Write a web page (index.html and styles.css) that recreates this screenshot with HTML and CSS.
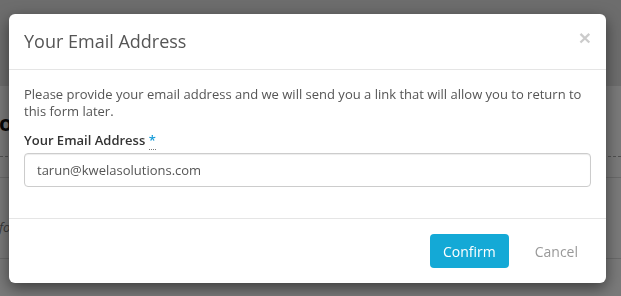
FILE: index.html
```html
<!DOCTYPE html>
<html lang="en">
<head>
<meta charset="UTF-8">
<meta name="viewport" content="width=device-width, initial-scale=1.0">
<title>Your Email Address</title>
<link rel="stylesheet" href="styles.css">
</head>
<body>
<div class="page">
    <div class="page-header"></div>
    <div class="page-content">
        <h2 class="page-title">Go</h2>
        <div class="rule dashed"></div>
        <div class="rule"></div>
        <p class="page-note">Info</p>
        <div class="rule low"></div>
    </div>
</div>
<div class="backdrop"></div>

<div class="modal">
    <div class="modal-header">
        <h4 class="modal-title">Your Email Address</h4>
        <button class="close" type="button">&times;</button>
    </div>
    <div class="modal-body">
        <p>Please provide your email address and we will send you a link that will allow you to return to this form later.</p>
        <div class="form-group">
            <label for="email">Your Email Address <abbr title="required">*</abbr></label>
            <input id="email" class="form-control" type="email" value="tarun@kwelasolutions.com">
        </div>
    </div>
    <div class="modal-footer">
        <button class="btn btn-primary" type="button">Confirm</button>
        <button class="btn btn-link" type="button">Cancel</button>
    </div>
</div>
</body>
</html>
```

FILE: styles.css
```css
* {
    box-sizing: border-box;
}

body {
    margin: 0;
    font-family: "Open Sans", Arial, sans-serif;
    font-size: 13px;
    color: #555;
    background-color: #fff;
    overflow: hidden;
}

.page {
    height: 296px;
}

.page-header {
    height: 86px;
    background-color: #e4e4e4;
}

.page-content {
    padding-top: 22px;
}

.page-title {
    margin: 0 0 0 -17px;
    font-size: 22px;
    font-weight: bold;
    color: #111;
    line-height: 28px;
}

.rule {
    border-top: 1px solid #ddd;
    margin-top: 20px;
}

.rule.dashed {
    border-top: 1px dashed #aaa;
    margin-top: 20px;
}

.page-note {
    margin: 40px 0 0 -12px;
    font-style: italic;
    color: #777;
}

.rule.low {
    margin-top: 22px;
}

.backdrop {
    position: fixed;
    top: 0;
    left: 0;
    right: 0;
    bottom: 0;
    background-color: rgba(0, 0, 0, 0.52);
}

.modal {
    position: absolute;
    top: 14px;
    left: 9px;
    width: 597px;
    background-color: #fff;
    border-radius: 6px;
    box-shadow: 0 5px 15px rgba(0, 0, 0, 0.5);
}

.modal-header {
    display: flex;
    justify-content: space-between;
    align-items: center;
    padding: 15px;
    border-bottom: 1px solid #e5e5e5;
}

.modal-title {
    margin: 0;
    font-size: 18px;
    font-weight: normal;
    line-height: 25px;
    color: #555;
}

.close {
    padding: 0;
    border: none;
    background: none;
    font-family: Arial, sans-serif;
    font-size: 21px;
    font-weight: bold;
    line-height: 1;
    color: #000;
    opacity: 0.2;
    margin-top: -8px;
    margin-right: 0;
}

.modal-body {
    padding: 16px 15px 15px;
}

.modal-body p {
    margin: 0 0 11px;
    line-height: 17px;
}

.form-group {
    margin-bottom: 16px;
}

label {
    display: block;
    margin-bottom: 4px;
    font-weight: 600;
    color: #333;
    line-height: 18px;
}

abbr {
    color: #1a9dd8;
    text-decoration: none;
    border-bottom: 1px dotted #777;
}

.form-control {
    display: block;
    width: 100%;
    height: 34px;
    padding: 6px 12px;
    font-family: inherit;
    font-size: 13px;
    color: #555;
    border: 1px solid #ccc;
    border-radius: 4px;
    box-shadow: inset 0 1px 1px rgba(0, 0, 0, 0.075);
}

.modal-footer {
    display: flex;
    justify-content: flex-end;
    gap: 13px;
    padding: 15px;
    border-top: 1px solid #e5e5e5;
}

.btn {
    height: 34px;
    padding: 6px 12px;
    font-family: inherit;
    font-size: 14px;
    border: 1px solid transparent;
    border-radius: 4px;
    cursor: pointer;
}

.btn-primary {
    background-color: #14a9d6;
    color: #fff;
}

.btn-link {
    background: none;
    color: #999;
}
```
